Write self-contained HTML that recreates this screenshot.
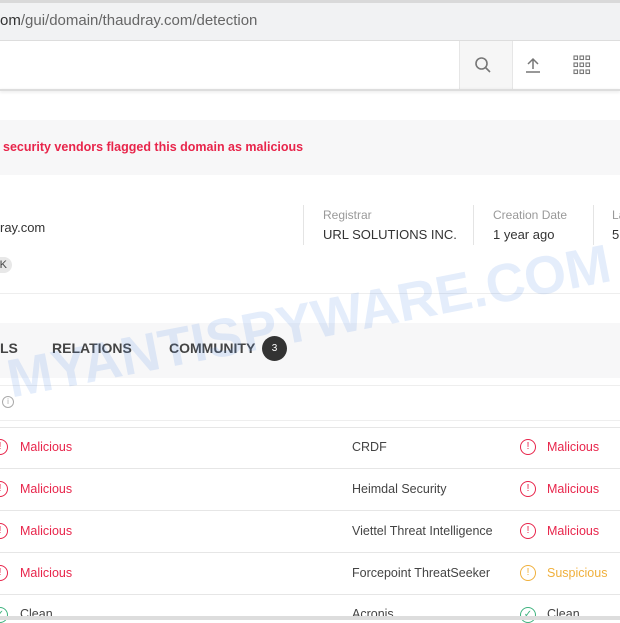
<!DOCTYPE html>
<html><head><meta charset="utf-8"><style>
*{margin:0;padding:0;box-sizing:border-box}
body{width:620px;height:620px;overflow:hidden;background:#fff;font-family:"Liberation Sans",sans-serif;position:relative}
.a{position:absolute;white-space:nowrap}
.hl{position:absolute;left:0;width:620px;height:1px;background:#e6e6e6}
.vl{position:absolute;width:1px;background:#e4e4e4}
.red{color:#e8254b}
.ic{position:absolute;width:16px;height:16px;border:1.2px solid #e8254b;border-radius:50%;font-size:10px;text-align:center;line-height:14px;color:#e8254b}
</style></head><body>
<div class="a" style="left:0;top:0;width:620px;height:3px;background:#d9d9d9"></div>
<div class="a" style="left:0;top:3px;width:620px;height:37px;background:#f1f2f3"></div>
<div class="a" style="left:0;top:12px;font-size:15px;color:#666"><span style="color:#333">om</span>/gui/domain/thaudray.com/detection</div>
<div class="hl" style="top:40px;background:#ddd"></div>
<div class="a" style="left:459px;top:41px;width:54px;height:48px;background:#f6f6f6;border-left:1px solid #e6e6e6;border-right:1px solid #e6e6e6"></div>
<div class="a" style="left:0;top:89px;width:620px;height:2px;background:#ddd;box-shadow:0 1px 3px rgba(0,0,0,.12)"></div>
<svg class="a" style="left:474px;top:56px" width="18" height="18" viewBox="0 0 18 18"><circle cx="7.5" cy="7.5" r="5.5" fill="none" stroke="#777" stroke-width="1.6"/><path d="M11.5 11.5L16 16" stroke="#777" stroke-width="1.6"/></svg>
<svg class="a" style="left:524px;top:56px" width="18" height="18" viewBox="0 0 18 18"><path d="M9 3V13M4 8L9 3L14 8M2 16H16" fill="none" stroke="#777" stroke-width="1.5"/></svg>
<svg class="a" style="left:573px;top:55px" width="18" height="20" viewBox="0 0 18 20"><g fill="none" stroke="#777" stroke-width="1.1"><rect x="1" y="1" width="3.5" height="3.5"/><rect x="7" y="1" width="3.5" height="3.5"/><rect x="13" y="1" width="3.5" height="3.5"/><rect x="1" y="8" width="3.5" height="3.5"/><rect x="7" y="8" width="3.5" height="3.5"/><rect x="13" y="8" width="3.5" height="3.5"/><rect x="1" y="15" width="3.5" height="3.5"/><rect x="7" y="15" width="3.5" height="3.5"/><rect x="13" y="15" width="3.5" height="3.5"/></g></svg>
<div class="a" style="left:0;top:120px;width:620px;height:55px;background:#f7f7f8"></div>
<div class="a red" style="left:3px;top:140px;font-size:12.5px;font-weight:bold">security vendors flagged this domain as malicious</div>
<div class="a" style="left:0;top:220px;font-size:13px;color:#333">ray.com</div>
<div class="a" style="left:-10px;top:257px;width:22px;height:16px;border-radius:8px;background:#e8e8e8;font-size:11px;color:#444;line-height:16px;text-align:right;padding-right:5px">K</div>
<div class="vl" style="left:303px;top:205px;height:40px"></div>
<div class="vl" style="left:473px;top:205px;height:40px"></div>
<div class="vl" style="left:593px;top:205px;height:40px"></div>
<div class="a" style="left:323px;top:208px;font-size:12px;color:#999">Registrar</div>
<div class="a" style="left:323px;top:227px;font-size:13px;color:#333">URL SOLUTIONS INC.</div>
<div class="a" style="left:493px;top:208px;font-size:12px;color:#999">Creation Date</div>
<div class="a" style="left:493px;top:227px;font-size:13px;color:#333">1 year ago</div>
<div class="a" style="left:612px;top:208px;font-size:12px;color:#999">La</div>
<div class="a" style="left:612px;top:227px;font-size:13px;color:#333">5</div>
<div class="hl" style="top:293px;background:#eee"></div>
<div class="a" style="left:0;top:323px;width:620px;height:55px;background:#f7f7f8"></div>
<div class="a" style="left:0;top:340px;font-size:14px;font-weight:bold;color:#444">LS</div>
<div class="a" style="left:52px;top:340px;font-size:14px;font-weight:bold;color:#444">RELATIONS</div>
<div class="a" style="left:169px;top:340px;font-size:14px;font-weight:bold;color:#444">COMMUNITY</div>
<div class="a" style="left:262px;top:336px;width:25px;height:25px;border-radius:50%;background:#333;color:#fff;font-size:10px;line-height:25px;text-align:center">3</div>
<div class="hl" style="top:385px;background:#eee"></div>
<div class="a" style="left:2px;top:396px;width:12px;height:12px;border:1px solid #aaa;border-radius:50%;font-size:8px;line-height:10px;text-align:center;color:#aaa">i</div>
<div class="hl" style="top:420px;background:#eee"></div>
<div class="hl" style="top:427px"></div>
<div class="hl" style="top:468px"></div>
<div class="hl" style="top:510px"></div>
<div class="hl" style="top:552px"></div>
<div class="hl" style="top:594px"></div>

<div class="ic" style="left:-8px;top:439px">!</div><div class="a red" style="left:20px;top:440px;font-size:12.5px">Malicious</div>
<div class="ic" style="left:-8px;top:481px">!</div><div class="a red" style="left:20px;top:482px;font-size:12.5px">Malicious</div>
<div class="ic" style="left:-8px;top:523px">!</div><div class="a red" style="left:20px;top:524px;font-size:12.5px">Malicious</div>
<div class="ic" style="left:-8px;top:565px">!</div><div class="a red" style="left:20px;top:566px;font-size:12.5px">Malicious</div>
<div class="ic" style="left:-8px;top:607px;border-color:#3fb37f;color:#3fb37f">✓</div><div class="a" style="left:20px;top:607px;font-size:12.5px;color:#444">Clean</div>

<div class="a" style="left:352px;top:440px;font-size:12.5px;color:#444">CRDF</div>
<div class="a" style="left:352px;top:482px;font-size:12.5px;color:#444">Heimdal Security</div>
<div class="a" style="left:352px;top:524px;font-size:12.5px;color:#444">Viettel Threat Intelligence</div>
<div class="a" style="left:352px;top:566px;font-size:12.5px;color:#444">Forcepoint ThreatSeeker</div>
<div class="a" style="left:352px;top:607px;font-size:12.5px;color:#444">Acronis</div>

<div class="ic" style="left:520px;top:439px">!</div><div class="a red" style="left:547px;top:440px;font-size:12.5px">Malicious</div>
<div class="ic" style="left:520px;top:481px">!</div><div class="a red" style="left:547px;top:482px;font-size:12.5px">Malicious</div>
<div class="ic" style="left:520px;top:523px">!</div><div class="a red" style="left:547px;top:524px;font-size:12.5px">Malicious</div>
<div class="ic" style="left:520px;top:565px;border-color:#f0b03c;color:#f0b03c">!</div><div class="a" style="left:547px;top:566px;font-size:12.5px;color:#f0b03c">Suspicious</div>
<div class="ic" style="left:520px;top:607px;border-color:#3fb37f;color:#3fb37f">✓</div><div class="a" style="left:547px;top:607px;font-size:12.5px;color:#444">Clean</div>

<div class="a" style="left:0;top:616px;width:620px;height:4px;background:#ddd"></div>
<div class="a" style="left:8px;top:350px;height:60px;line-height:60px;font-size:54px;font-weight:bold;color:rgba(90,140,230,0.16);transform:rotate(-11deg);transform-origin:0 50%">MYANTISPYWARE.COM</div>
</body></html>
